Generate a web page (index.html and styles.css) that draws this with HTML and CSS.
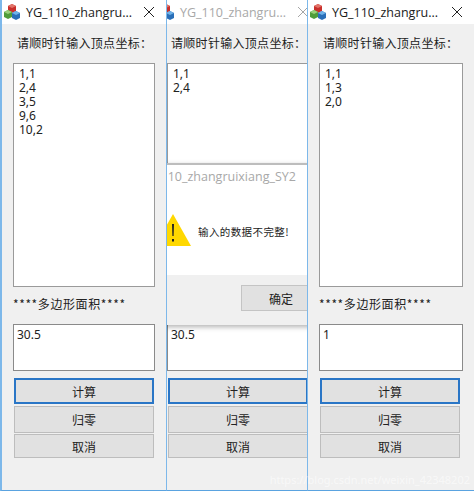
FILE: index.html
```html
<!DOCTYPE html>
<html lang="zh">
<head>
  <meta charset="UTF-8">
  <meta name="viewport" content="width=device-width, initial-scale=1.0">
  <title>YG_110_zhangruixiang_SY2</title>
  <link rel="stylesheet" href="styles.css">
</head>
<body>
  <svg width="0" height="0" class="defs">
    <symbol id="app-icon" viewBox="0 0 16 16">
      <path d="M4 2l4-2 4 2v5l-4 2-4-2z" fill="#c9302c"/>
      <path d="M4 2l4-2 4 2-4 2z" fill="#e2746a"/>
      <path d="M0 8l4-2 4 2v5l-4 2-4-2z" fill="#4f9d3a"/>
      <path d="M0 8l4-2 4 2-4 2z" fill="#9ad07a"/>
      <path d="M8 9l4-2 4 2v5l-4 2-4-2z" fill="#2a6fb8"/>
      <path d="M8 9l4-2 4 2-4 2z" fill="#6fb2e8"/>
    </symbol>
    <symbol id="close-icon" viewBox="0 0 12 12">
      <path d="M1 1l10 10M11 1L1 11" stroke="#222" stroke-width="1" fill="none"/>
    </symbol>
  </svg>

  <div class="screen">
    <!-- 第一个窗口 -->
    <div class="window window-first">
      <div class="titlebar">
        <svg class="app-icon"><use href="#app-icon"/></svg>
        <span class="title-text">YG_110_zhangru...</span>
        <svg class="close-icon"><use href="#close-icon"/></svg>
      </div>
      <div class="content">
        <label class="field-label">请顺时针输入顶点坐标：</label>
        <textarea class="points" readonly>1,1
2,4
3,5
9,6
10,2</textarea>
        <label class="area-label">****多边形面积****</label>
        <textarea class="result" readonly>30.5</textarea>
        <button class="btn btn-focus" type="button">计算</button>
        <button class="btn btn-zero" type="button">归零</button>
        <button class="btn btn-cancel" type="button">取消</button>
      </div>
    </div>

    <!-- 第二个窗口，带提示框 -->
    <div class="window window-second">
      <div class="titlebar titlebar-inactive">
        <svg class="app-icon"><use href="#app-icon"/></svg>
        <span class="title-text">YG_110_zhangru...</span>
        <svg class="close-icon"><use href="#close-icon"/></svg>
      </div>
      <div class="content">
        <label class="field-label">请顺时针输入顶点坐标：</label>
        <textarea class="points" readonly>1,1
2,4</textarea>
        <!-- 面积标签被提示框挡住，这里只占位 -->
        <div class="area-label"></div>
        <textarea class="result" readonly>30.5</textarea>
        <button class="btn btn-focus" type="button">计算</button>
        <button class="btn btn-zero" type="button">归零</button>
        <button class="btn btn-cancel" type="button">取消</button>
      </div>
      <div class="dialog">
        <div class="dialog-title">YG_110_zhangruixiang_SY2</div>
        <div class="dialog-body">
          <svg class="warn-icon" viewBox="0 0 36 32">
            <path d="M18 0L36 32H0z" fill="#ffd800"/>
            <path d="M17 10h2l-.4 12h-1.2zM17 25h2v2.4h-2z" fill="#222"/>
          </svg>
          <span class="dialog-msg">输入的数据不完整!</span>
        </div>
        <div class="dialog-footer">
          <button class="btn dialog-btn" type="button">确定</button>
        </div>
      </div>
    </div>

    <!-- 第三个窗口 -->
    <div class="window window-third">
      <div class="titlebar">
        <svg class="app-icon"><use href="#app-icon"/></svg>
        <span class="title-text">YG_110_zhangru...</span>
        <svg class="close-icon"><use href="#close-icon"/></svg>
      </div>
      <div class="content">
        <label class="field-label">请顺时针输入顶点坐标：</label>
        <textarea class="points" readonly>1,1
1,3
2,0</textarea>
        <label class="area-label">****多边形面积****</label>
        <textarea class="result" readonly>1</textarea>
        <button class="btn btn-focus" type="button">计算</button>
        <button class="btn btn-zero" type="button">归零</button>
        <button class="btn btn-cancel" type="button">取消</button>
      </div>
    </div>
  </div>

  <div class="watermark">https://blog.csdn.net/weixin_42348202</div>
</body>
</html>
```

FILE: styles.css
```css
html, body {
  height: 100%;
}

body {
  margin: 0;
  background-color: #fff;
  color: #222;
  font-family: "Noto Sans CJK SC", "Noto Sans", sans-serif;
  font-size: 12px;
  overflow: hidden;
  position: relative;
}

.defs {
  position: absolute;
}

.screen {
  display: flex;
  width: 474px;
  height: 491px;
}

.window {
  position: relative;
  flex: 0 0 167px;
  box-sizing: border-box;
  width: 167px;
  height: 491px;
  background-color: #f0f0f0;
  border-left: 2px solid #7db8ea;
  border-right: 1px solid #7db8ea;
  border-bottom: 1px solid #5aa3e0;
}

.window-first {
  z-index: 2;
}

.window-second {
  z-index: 1;
  margin-left: -13px;
  margin-right: -14px;
}

.window-third {
  z-index: 3;
  border-left-width: 1px;
  border-right: none;
}

.titlebar {
  display: flex;
  align-items: center;
  height: 24px;
  background-color: #fff;
  padding-left: 2px;
}

.app-icon {
  width: 16px;
  height: 16px;
  flex: none;
}

.title-text {
  margin-left: 6px;
  font-family: "Open Sans", sans-serif;
  font-size: 12.5px;
  color: #1a1a1a;
  white-space: nowrap;
}

.titlebar-inactive .title-text {
  color: #a8a8a8;
}

.close-icon {
  width: 12px;
  height: 12px;
  flex: none;
  margin-left: auto;
  margin-right: 11px;
}

.titlebar-inactive .close-icon {
  opacity: 0.4;
}

.content {
  display: flex;
  flex-direction: column;
  padding: 10px 11px 0;
}

.field-label {
  height: 18px;
  line-height: 18px;
  margin: 0 0 11px 4px;
  font-size: 12px;
  letter-spacing: 0.3px;
  white-space: nowrap;
}

.area-label {
  height: 18px;
  line-height: 18px;
  margin: 8px 0 11px;
  font-size: 12px;
  letter-spacing: 0.6px;
  white-space: nowrap;
}

textarea {
  display: block;
  box-sizing: border-box;
  width: 100%;
  margin: 0;
  padding: 3px 2px;
  background-color: #fff;
  border: 1px solid #9a9a9a;
  border-radius: 0;
  color: #222;
  font-family: "Noto Sans", sans-serif;
  font-size: 12px;
  line-height: 14px;
  resize: none;
  outline: none;
  overflow: hidden;
}

.points {
  height: 224px;
  padding-left: 5px;
}

.result {
  height: 47px;
  padding-left: 3px;
  border-color: #8a8a8a;
}

.btn {
  display: block;
  box-sizing: border-box;
  background-color: #e1e1e1;
  border: 1px solid #bdbdbd;
  color: #222;
  font-family: "Noto Sans CJK SC", sans-serif;
  font-size: 12px;
  padding: 0;
  margin: 0 1px;
  width: 140px;
}

.btn-focus {
  height: 26px;
  margin-top: 7px;
  border: 2px solid #2a76c6;
}

.btn-zero {
  height: 27px;
  margin-top: 2px;
}

.btn-cancel {
  height: 24px;
  margin-top: 1px;
}

/* 提示框 */
.dialog {
  position: absolute;
  top: 163px;
  left: -30px;
  box-sizing: border-box;
  width: 205px;
  height: 162px;
  display: flex;
  flex-direction: column;
  background-color: #fff;
  border-top: 2px solid #bdbdbd;
  box-shadow: 0 2px 5px rgba(0, 0, 0, 0.3);
}

.dialog-title {
  height: 22px;
  line-height: 22px;
  margin-top: 1px;
  padding-left: 13px;
  font-family: "Open Sans", sans-serif;
  font-size: 12.5px;
  color: #a8a8a8;
  white-space: nowrap;
}

.dialog-body {
  flex: 1;
  display: flex;
  align-items: center;
}

.warn-icon {
  width: 36px;
  height: 32px;
  flex: none;
  margin-left: 29px;
  margin-top: -3px;
}

.dialog-msg {
  margin-left: 7px;
  font-size: 10.5px;
  letter-spacing: 0.4px;
  white-space: nowrap;
}

.dialog-footer {
  height: 50px;
  box-sizing: border-box;
  padding: 10px 0 0 115px;
  background-color: #f0f0f0;
}

.dialog-btn {
  width: 80px;
  height: 26px;
  margin: 0;
  border-color: #c4c4c4;
}

.watermark {
  position: absolute;
  z-index: 5;
  right: 4px;
  top: 472px;
  color: rgba(255, 255, 255, 0.55);
  font-family: "Noto Sans", sans-serif;
  font-size: 11px;
  white-space: nowrap;
}
```
